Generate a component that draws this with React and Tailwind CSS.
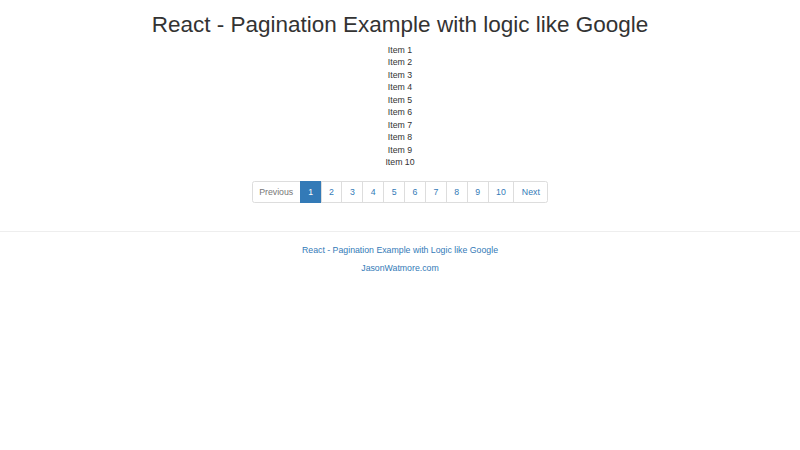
const items = Array.from({ length: 10 }, (_, i) => `Item ${i + 1}`)
const pages = [1, 2, 3, 4, 5, 6, 7, 8, 9, 10]

export default function App() {
  return (
    <div className="min-h-[450px] bg-white text-[#333] font-['Liberation_Sans',Arial,sans-serif] text-[8.75px] leading-[12.5px]">
      <div className="text-center">
        <h1 className="mt-[12.5px] mb-[6.25px] text-[22.5px] leading-[24.75px] font-normal">
          React - Pagination Example with logic like Google
        </h1>
        <div>
          {items.map((item) => (
            <div key={item}>{item}</div>
          ))}
        </div>
        <ul className="inline-flex my-[12.5px] rounded-[2.5px]">
          <li>
            <span className="block px-[6.5px] py-[3.75px] leading-[12.5px] border border-[#ddd] text-[#777] rounded-l-[2.5px]">
              Previous
            </span>
          </li>
          {pages.map((p) => (
            <li key={p}>
              <a
                href="#"
                className={
                  p === 1
                    ? 'block -ml-px px-[7.5px] py-[3.75px] leading-[12.5px] border border-[#337ab7] bg-[#337ab7] text-white'
                    : 'block -ml-px px-[7.5px] py-[3.75px] leading-[12.5px] border border-[#ddd] text-[#337ab7]'
                }
              >
                {p}
              </a>
            </li>
          ))}
          <li>
            <a
              href="#"
              className="block -ml-px px-[7.5px] py-[3.75px] leading-[12.5px] border border-[#ddd] text-[#337ab7] rounded-r-[2.5px]"
            >
              Next
            </a>
          </li>
        </ul>
      </div>
      <hr className="mt-[15px] border-t border-[#eee]" />
      <div className="text-center pt-[12px]">
        <p className="mb-[6px]">
          <a href="#" className="text-[#337ab7]">React - Pagination Example with Logic like Google</a>
        </p>
        <p>
          <a href="#" className="text-[#337ab7]">JasonWatmore.com</a>
        </p>
      </div>
    </div>
  )
}
